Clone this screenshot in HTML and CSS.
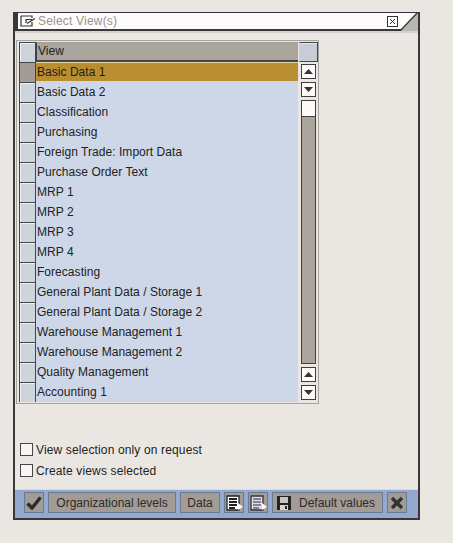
FILE: index.html
```html
<!DOCTYPE html>
<html lang="en">
<head>
<meta charset="utf-8">
<title>Select View(s)</title>
<link rel="stylesheet" href="styles.css">
</head>
<body>
<main class="window">
  <header class="titlebar">
    <svg class="title-icon" width="16" height="12" viewBox="0 0 16 12"><path d="M1 1H12V3M12 4.5L6 4.5L6 8M15 3.5L7 8.5M12 7V11H1V1" fill="none" stroke="#333" stroke-width="1.2"/></svg>
    <span class="title-text">Select View(s)</span>
    <span class="close"><svg width="11" height="11" viewBox="0 0 11 11"><path d="M3 3L8 8M8 3L3 8" stroke="#333" stroke-width="1"/></svg></span>
    <svg class="corner" width="18" height="19" viewBox="0 0 18 19"><path d="M18 0V19H0Z" fill="#b9b7b1"/><path d="M18 0L0 19" stroke="#333" stroke-width="1.3"/></svg>
  </header>
  <div class="content">
    <section class="table">
      <div class="table-main">
        <div class="row head"><span class="mark"></span><span class="cell">View</span></div>
        <div class="row selected"><span class="mark"></span><span class="cell">Basic Data 1</span></div>
        <div class="row"><span class="mark"></span><span class="cell">Basic Data 2</span></div>
        <div class="row"><span class="mark"></span><span class="cell">Classification</span></div>
        <div class="row"><span class="mark"></span><span class="cell">Purchasing</span></div>
        <div class="row"><span class="mark"></span><span class="cell">Foreign Trade: Import Data</span></div>
        <div class="row"><span class="mark"></span><span class="cell">Purchase Order Text</span></div>
        <div class="row"><span class="mark"></span><span class="cell">MRP 1</span></div>
        <div class="row"><span class="mark"></span><span class="cell">MRP 2</span></div>
        <div class="row"><span class="mark"></span><span class="cell">MRP 3</span></div>
        <div class="row"><span class="mark"></span><span class="cell">MRP 4</span></div>
        <div class="row"><span class="mark"></span><span class="cell">Forecasting</span></div>
        <div class="row"><span class="mark"></span><span class="cell">General Plant Data / Storage 1</span></div>
        <div class="row"><span class="mark"></span><span class="cell">General Plant Data / Storage 2</span></div>
        <div class="row"><span class="mark"></span><span class="cell">Warehouse Management 1</span></div>
        <div class="row"><span class="mark"></span><span class="cell">Warehouse Management 2</span></div>
        <div class="row"><span class="mark"></span><span class="cell">Quality Management</span></div>
        <div class="row"><span class="mark"></span><span class="cell">Accounting 1</span></div>
      </div>
      <div class="scroll">
        <span class="head-corner"></span>
        <span class="sbtn first"><svg width="9" height="6" viewBox="0 0 9 6"><path d="M4.5 0L9 5H0Z" fill="#333"/></svg></span>
        <span class="sbtn"><svg width="9" height="6" viewBox="0 0 9 6"><path d="M0 0H9L4.5 5Z" fill="#333"/></svg></span>
        <span class="thumb"></span>
        <span class="track"></span>
        <span class="sbtn"><svg width="9" height="6" viewBox="0 0 9 6"><path d="M4.5 0L9 5H0Z" fill="#333"/></svg></span>
        <span class="sbtn"><svg width="9" height="6" viewBox="0 0 9 6"><path d="M0 0H9L4.5 5Z" fill="#333"/></svg></span>
      </div>
    </section>
    <div class="options">
      <label class="option"><span class="box"></span>View selection only on request</label>
      <label class="option"><span class="box"></span>Create views selected</label>
    </div>
  </div>
  <footer class="toolbar">
    <button class="btn icon"><svg width="16" height="14" viewBox="0 0 16 14"><path d="M1.5 7.5L6 12L14.5 1.5" fill="none" stroke="#2c2a2c" stroke-width="3.4"/></svg></button>
    <button class="btn org">Organizational levels</button>
    <button class="btn data">Data</button>
    <button class="btn icon"><svg width="17" height="16" viewBox="0 0 17 16"><path d="M1 1H13V15H1Z" fill="#fff" stroke="#222" stroke-width="1.3"/><path d="M3 4H11M3 7H11M3 10H11M3 13H9" stroke="#222" stroke-width="2"/><path d="M12 8L17 12L12 15Z" fill="#fff"/></svg></button>
    <button class="btn icon"><svg width="17" height="16" viewBox="0 0 17 16"><path d="M1 1H13V15H1Z" fill="#dde" stroke="#333" stroke-width="1.3"/><path d="M3 4H11M3 7H11M3 10H11M3 13H9" stroke="#667" stroke-width="1.5"/><path d="M12 8L17 12L12 15Z" fill="#fff"/></svg></button>
    <button class="btn def"><svg width="16" height="16" viewBox="0 0 16 16"><path d="M1 2Q1 1 2 1H14Q15 1 15 2V15H1Z" fill="#222"/><path d="M4 2H12V8H4Z" fill="#c9c5bf"/><path d="M4 10H12V15H4Z" fill="#d8d4ce"/><path d="M9 11H11V14H9Z" fill="#222"/></svg><span class="def-label">Default values</span></button>
    <button class="btn icon"><svg width="14" height="14" viewBox="0 0 14 14"><path d="M2 2L12 12M12 2L2 12" stroke="#333" stroke-width="3.4"/></svg></button>
  </footer>
</main>
</body>
</html>
```
FILE: styles.css
```css
* { box-sizing: border-box; }
html, body { margin: 0; height: 100%; }
body { background: #eae7e3; font-family: "Liberation Sans", Arial, sans-serif; font-size: 12px; color: #222; padding: 12px 0 0 13px; overflow: hidden; }
.window { width: 407px; height: 508px; border: solid #3a363c; border-width: 1px 2px 2px 2px; display: flex; flex-direction: column; background: #eae7e3; }
.titlebar { position: relative; height: 18px; flex: none; display: flex; align-items: center; background: #fdfcfa; border-bottom: 2px solid #3a363c; border-left: 3px solid #3a363c; box-shadow: 0 2px 0 #d4d3cf; padding-left: 2px; }
.title-icon { flex: none; }
.title-text { margin-left: 2px; color: #97938f; letter-spacing: 0.2px; }
.close { position: absolute; left: 369px; top: 3px; width: 11px; height: 11px; border: 1px solid #333; background: #fff; display: flex; }
.close svg { margin: -1px; flex: none; }
.corner { position: absolute; right: 0; top: -1px; }
.content { flex: 1; display: flex; flex-direction: column; padding: 9px 0 0 1px; }
.table { width: 303px; height: 364px; border: 1px solid #a6a39e; padding: 1px 0 0 2px; display: flex; }
.table-main { width: 279px; flex: none; display: flex; flex-direction: column; }
.row { height: 20px; display: flex; flex: none; }
.mark { width: 17px; flex: none; background: #cdd5dc; border: solid #45444a; border-width: 1px 1px 0 1px; box-shadow: inset 1px 1px 0 #eef0f2; }
.cell { flex: 1; padding-left: 1px; background: #cdd7e7; line-height: 20px; white-space: nowrap; letter-spacing: 0.04px; }
.head .cell { background: #aaa49d; border-left: 1px solid #3f3e42; border-bottom: 2px solid #45444a; border-top: 1px solid #a39d96; line-height: 17px; }
.selected .cell { background: #b98e31; color: #2a1c0c; box-shadow: inset 0 1px 0 #e9d6a0, inset 0 -1px 0 #e9d6a0; }
.selected .mark { background: #a29c95; box-shadow: none; }
.scroll { flex: 1; display: flex; flex-direction: column; align-items: flex-end; }
.head-corner { width: 19px; height: 20px; flex: none; background: #c6cdd4; border: 1px solid #45444a; border-left-color: #c6cdd4; box-shadow: inset 0 1px 0 #e6e8ea; }
.sbtn { width: 15px; height: 15px; flex: none; margin: 0 2px 3px 0; background: #fbfaf8; border: 1px solid #3f3e42; display: flex; align-items: center; justify-content: center; }
.sbtn.first { margin-top: 2px; }
.thumb { width: 15px; height: 17px; flex: none; margin-right: 2px; background: #fbfaf8; border: 1px solid #3f3e42; }
.track { width: 15px; flex: 1; margin: 0 2px 3px 0; background: #aaa49d; border: 1px solid #3f3e42; border-top: 0; }
.options { margin: 39px 0 0 4px; display: flex; flex-direction: column; gap: 8px; }
.option { display: flex; align-items: center; gap: 3px; height: 13px; letter-spacing: 0.14px; }
.box { width: 13px; height: 13px; background: #f7f6f4; border: 1px solid #48464a; }
.toolbar { height: 29px; flex: none; display: flex; align-items: flex-start; gap: 4px; padding: 2px 0 0 9px; background: #93a9cf; border-top: 1px solid #d3dbe9; }
.btn { height: 21px; padding: 0; background: #a39c96; border: 1px solid #6a7a92; font: inherit; color: #2a2a2a; display: flex; align-items: center; justify-content: center; }
.btn.icon { width: 20px; }
.btn.org { width: 128px; }
.btn.data { width: 40px; }
.btn.def { width: 111px; padding-left: 3px; justify-content: flex-start; }
.def-label { margin-left: 7px; }
```
